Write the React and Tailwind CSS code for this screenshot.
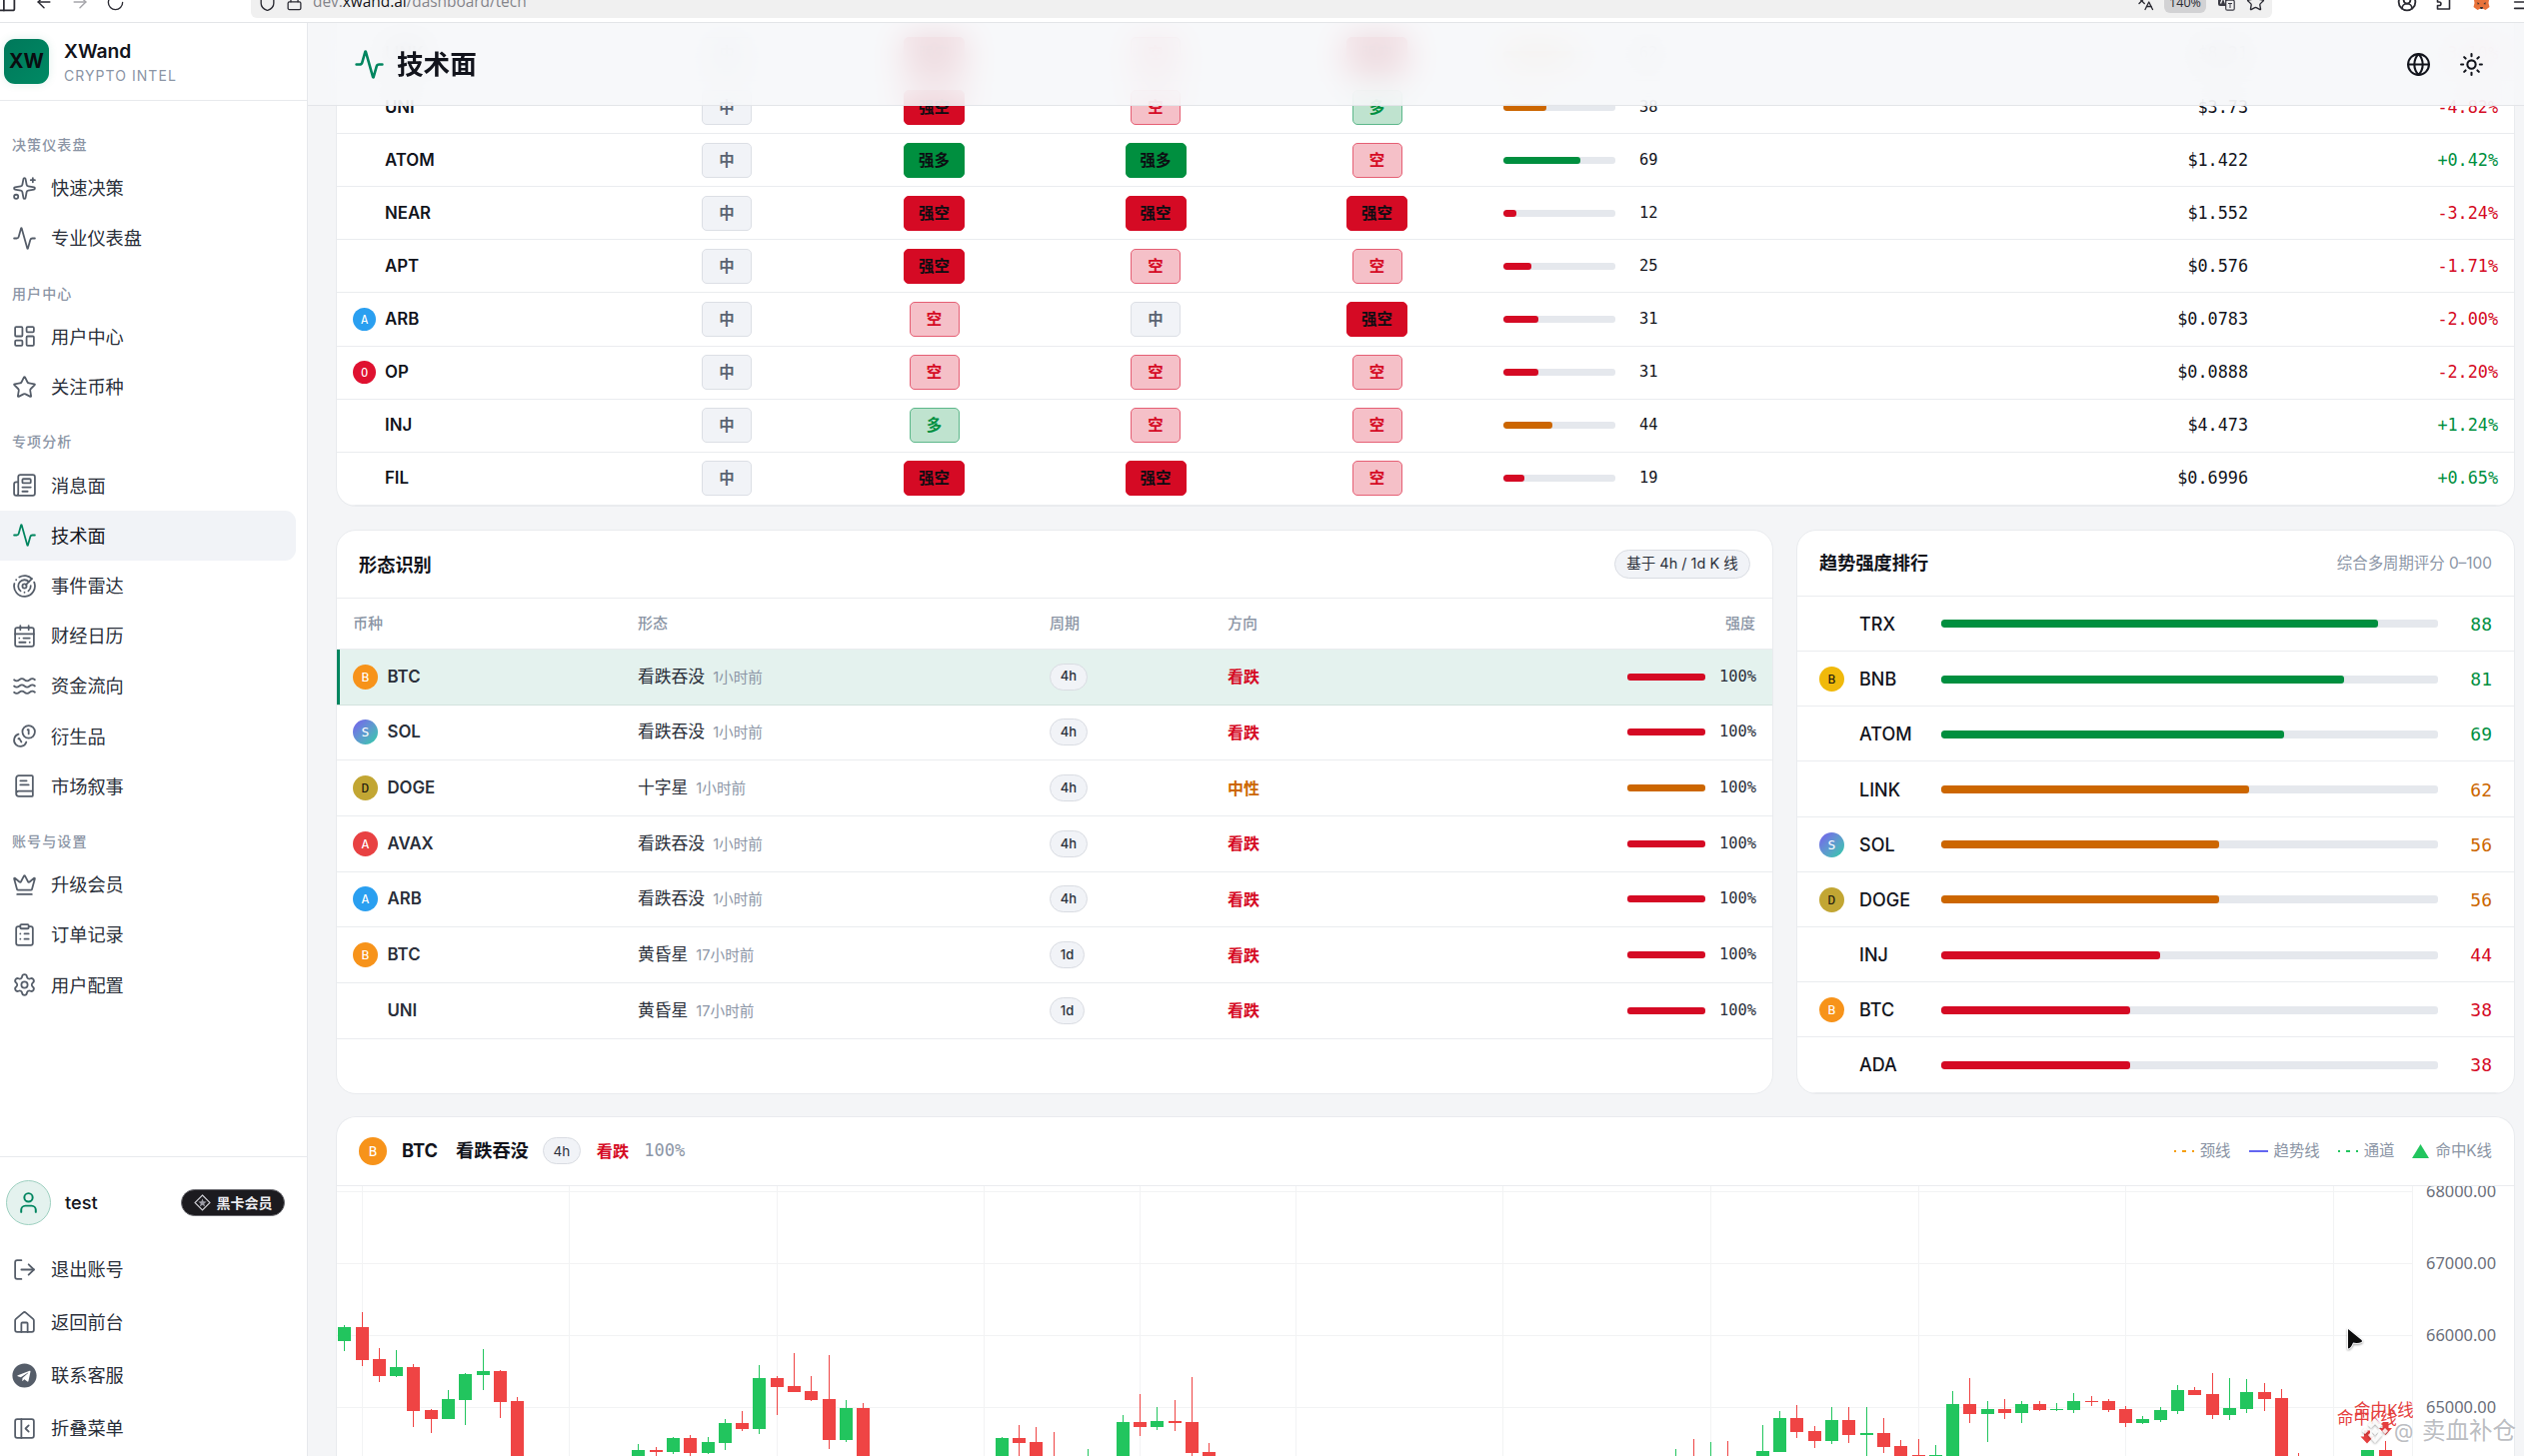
import React from "react";
import {
  Activity, Sparkles, LayoutDashboard, Star, Newspaper, Radar, CalendarRange, Waves,
  BookText, Crown, ClipboardList, Settings, LogOut, House, PanelLeftClose, User, Globe, Sun,
  ArrowLeft, ArrowRight, RotateCw, Shield, Lock, Languages, PanelLeft, CircleUserRound, Menu,
} from "lucide-react";
import { FaTelegram } from "react-icons/fa";

const MONO = "font-['DejaVu_Sans_Mono',monospace]";

function CoinPair({ className, strokeWidth }) {
  return (
    <svg className={className} viewBox="0 0 24 24" fill="none" stroke="currentColor" strokeWidth={strokeWidth} strokeLinecap="round" strokeLinejoin="round">
      <path d="M13.744 17.736a6 6 0 1 1-7.48-7.48" />
      <path d="M15 6h1v4" />
      <path d="m6.134 14.768.866-.5 2 3.464" />
      <circle cx="16" cy="8" r="6" />
    </svg>
  );
}

const NAV = [
  ["决策仪表盘", "h-[62.2px] pt-[32px]", [[Sparkles, "快速决策"], [Activity, "专业仪表盘"]]],
  ["用户中心", "h-[48.2px] pt-[18.500px]", [[LayoutDashboard, "用户中心"], [Star, "关注币种"]]],
  ["专项分析", "h-[48.5px] pt-[18px]", [
    [Newspaper, "消息面"], [Activity, "技术面", true], [Radar, "事件雷达"], [CalendarRange, "财经日历"],
    [Waves, "资金流向"], [CoinPair, "衍生品"], [BookText, "市场叙事"],
  ]],
  ["账号与设置", "h-[48.3px] pt-[18.500px]", [[Crown, "升级会员"], [ClipboardList, "订单记录"], [Settings, "用户配置"]]],
];

const FOOT = [[LogOut, "退出账号"], [House, "返回前台"], [FaTelegram, "联系客服"], [PanelLeftClose, "折叠菜单"]];

const COIN = {
  ARB: "bg-[#2a9ff0] text-white",
  OP: "bg-[#df1130] text-white",
  BTC: "bg-[#f7931a] text-white",
  SOL: "bg-linear-135 from-[#7557ee] to-[#22cda6] text-white",
  DOGE: "bg-[#c2a633] text-[#221a10]",
  AVAX: "bg-[#e84142] text-white",
  BNB: "bg-[#f0b90b] text-[#221a10]",
};

const BG = { r: "bg-[#d50a24]", g: "bg-[#008f3f]", o: "bg-[#cc6600]" };
const FG = { r: "text-[#d50a24]", g: "text-[#008f3f]", o: "text-[#cc6600]" };

const SIGNAL = {
  中: "w-[50px] bg-[#f1f3f7] border-[#dcdfe5] text-[#5b6472]",
  空: "w-[50px] bg-[#f5c0c8] border-[#e55f74] text-[#d50a24]",
  多: "w-[50px] bg-[#bfe3cf] border-[#5cb78a] text-[#008f3f]",
  强空: "w-[61px] bg-[#d50a24] border-[#d50a24] text-[#0c0d12]",
  强多: "w-[61px] bg-[#008f3f] border-[#008f3f] text-[#0c0d12]",
};

const ROWS = [
  ["LINK", ["中", "强空", "空", "强空"], 62, "o", "$8.21", "-3.10%"],
  ["UNI", ["中", "强空", "空", "多"], 38, "o", "$3.73", "-4.82%"],
  ["ATOM", ["中", "强多", "强多", "空"], 69, "g", "$1.422", "+0.42%"],
  ["NEAR", ["中", "强空", "强空", "强空"], 12, "r", "$1.552", "-3.24%"],
  ["APT", ["中", "强空", "空", "空"], 25, "r", "$0.576", "-1.71%"],
  ["ARB", ["中", "空", "中", "强空"], 31, "r", "$0.0783", "-2.00%"],
  ["OP", ["中", "空", "空", "空"], 31, "r", "$0.0888", "-2.20%"],
  ["INJ", ["中", "多", "空", "空"], 44, "o", "$4.473", "+1.24%"],
  ["FIL", ["中", "强空", "强空", "空"], 19, "r", "$0.6996", "+0.65%"],
];

const PATTERNS = [
  ["BTC", "看跌吞没", "1小时前", "4h", "看跌", "r"],
  ["SOL", "看跌吞没", "1小时前", "4h", "看跌", "r"],
  ["DOGE", "十字星", "1小时前", "4h", "中性", "o"],
  ["AVAX", "看跌吞没", "1小时前", "4h", "看跌", "r"],
  ["ARB", "看跌吞没", "1小时前", "4h", "看跌", "r"],
  ["BTC", "黄昏星", "17小时前", "1d", "看跌", "r"],
  ["UNI", "黄昏星", "17小时前", "1d", "看跌", "r"],
];

const RANKS = [
  ["TRX", 88, "g"], ["BNB", 81, "g"], ["ATOM", 69, "g"], ["LINK", 62, "o"], ["SOL", 56, "o"],
  ["DOGE", 56, "o"], ["INJ", 44, "r"], ["BTC", 38, "r"], ["ADA", 38, "r"],
];

// Each candle: centre x, high, body top, body bottom, low, up (1) or down (0).
const CANDLES = [
  [344, 1326, 1328, 1342, 1352, 1], [362, 1313, 1328, 1361, 1367, 0], [379, 1349, 1360, 1377, 1383, 0],
  [396, 1351, 1368, 1377, 1378, 1], [413, 1365, 1368, 1412, 1428, 0], [431, 1410, 1411, 1420, 1434, 0],
  [448, 1391, 1400, 1420, 1420, 1], [465, 1374, 1375, 1401, 1426, 1], [483, 1350, 1372, 1376, 1391, 1],
  [500, 1371, 1372, 1403, 1419, 0], [517, 1398, 1402, 1470, 1470, 0], [638, 1445, 1451, 1470, 1470, 1],
  [656, 1448, 1451, 1453, 1460, 0], [673, 1438, 1439, 1453, 1455, 1], [690, 1436, 1439, 1454, 1458, 0],
  [708, 1438, 1443, 1454, 1455, 1], [725, 1420, 1424, 1444, 1451, 1], [742, 1412, 1424, 1430, 1432, 0],
  [759, 1366, 1379, 1430, 1435, 1], [777, 1377, 1379, 1388, 1416, 0], [794, 1354, 1387, 1393, 1393, 0],
  [811, 1377, 1392, 1401, 1402, 0], [829, 1356, 1400, 1441, 1450, 0], [846, 1401, 1409, 1441, 1443, 1],
  [863, 1404, 1409, 1470, 1470, 0], [1002, 1438, 1439, 1470, 1470, 1], [1019, 1426, 1439, 1444, 1460, 0],
  [1036, 1428, 1443, 1470, 1470, 0], [1054, 1433, 1460, 1470, 1470, 0], [1088, 1450, 1460, 1470, 1470, 1],
  [1123, 1416, 1423, 1470, 1470, 1], [1140, 1395, 1423, 1428, 1437, 0], [1157, 1408, 1422, 1428, 1431, 1],
  [1175, 1401, 1422, 1424, 1432, 0], [1192, 1378, 1423, 1454, 1460, 0], [1209, 1444, 1453, 1470, 1470, 0],
  [1676, 1450, 1460, 1470, 1470, 1], [1694, 1440, 1460, 1470, 1470, 0], [1711, 1443, 1460, 1470, 1470, 1],
  [1728, 1442, 1460, 1470, 1470, 0], [1763, 1426, 1452, 1470, 1470, 1], [1780, 1412, 1419, 1453, 1453, 1],
  [1797, 1406, 1419, 1433, 1439, 0], [1815, 1427, 1432, 1442, 1449, 0], [1832, 1408, 1421, 1442, 1445, 1],
  [1849, 1408, 1421, 1436, 1444, 0], [1867, 1408, 1434, 1436, 1460, 1], [1884, 1419, 1434, 1448, 1454, 0],
  [1901, 1441, 1447, 1470, 1470, 0], [1919, 1440, 1456, 1470, 1470, 0], [1936, 1446, 1456, 1470, 1470, 1],
  [1953, 1392, 1405, 1470, 1470, 1], [1970, 1379, 1405, 1415, 1424, 0], [1988, 1402, 1410, 1415, 1443, 1],
  [2005, 1400, 1410, 1414, 1420, 0], [2022, 1402, 1405, 1414, 1424, 1], [2040, 1402, 1405, 1411, 1412, 0],
  [2057, 1404, 1410, 1411, 1412, 1], [2074, 1394, 1402, 1411, 1414, 1], [2092, 1397, 1402, 1403, 1407, 0],
  [2109, 1400, 1402, 1411, 1413, 0], [2126, 1407, 1410, 1424, 1428, 0], [2143, 1417, 1420, 1424, 1425, 1],
  [2161, 1408, 1411, 1421, 1423, 1], [2178, 1386, 1391, 1412, 1415, 1], [2195, 1388, 1391, 1396, 1396, 0],
  [2213, 1374, 1395, 1416, 1420, 0], [2230, 1379, 1409, 1416, 1421, 1], [2247, 1380, 1393, 1410, 1414, 1],
  [2265, 1384, 1393, 1400, 1412, 0], [2282, 1390, 1399, 1470, 1470, 0], [2299, 1454, 1460, 1470, 1470, 0],
  [2368, 1451, 1451, 1470, 1470, 1], [2386, 1442, 1451, 1470, 1470, 0],
];
const GRID_X = [362, 569, 777, 984, 1140, 1296, 1503, 1711, 1919, 2126, 2334, 2413];
const GRID_Y = [1192, 1264, 1336, 1408];

function Coin({ name, size = "size-[25px] text-[13px]" }) {
  return (
    <span className={`${size} ${MONO} flex shrink-0 items-center justify-center rounded-full leading-none font-normal ${COIN[name] || ""}`}>
      {COIN[name] ? name[0] : ""}
    </span>
  );
}

function Pill({ children, className = "" }) {
  return (
    <span className={`inline-flex items-center justify-center rounded-full border border-[#d9dce2] bg-[#f1f3f7] text-[#2a2f3a] ${className}`}>
      {children}
    </span>
  );
}

function BrowserBar() {
  return (
    <div className="h-[23px] shrink-0 overflow-hidden border-b border-[#e3e5e8] bg-white">
      <div className="-mt-[14px] flex h-8 items-center text-[#2b2b33]">
        <PanelLeft className="-ml-[4px] size-[21px] shrink-0" strokeWidth={2} />
        <ArrowLeft className="ml-[17px] size-[20px] shrink-0" strokeWidth={1.7} />
        <ArrowRight className="ml-[16px] size-[20px] shrink-0 text-[#a5a5aa]" strokeWidth={1.7} />
        <RotateCw className="ml-[16px] size-[19px] shrink-0" strokeWidth={1.7} />
        <div className="ml-[126px] flex h-8 w-[2022px] shrink-0 items-center rounded-md bg-[#f0f0f0] pl-[7px]">
          <Shield className="size-[19px]" strokeWidth={1.7} />
          <Lock className="ml-[9px] size-[17px]" strokeWidth={1.8} />
          <span className="ml-[10px] text-[15.4px] leading-none text-[#85858b] font-['Open_Sans',sans-serif]">
            dev.<span className="text-[#15151a]">xwand.ai</span>/dashboard/tech
          </span>
          <span className="grow" />
          <Languages className="size-[18px]" strokeWidth={1.8} />
          <span className="ml-[10px] flex h-[21px] w-[42px] items-center justify-center rounded-md bg-[#d2d2d4] pt-[2px] text-[12.5px] leading-none font-['Open_Sans',sans-serif]">140%</span>
          <svg className="ml-[12px] size-[17px]" viewBox="0 0 17 17">
            <rect x="0" y="0" width="10" height="12" rx="2" fill="#3b3b44" />
            <path d="M2.5 9.5 5 3l2.500 6.500" fill="none" stroke="#f0f0f0" strokeWidth="1.3" />
            <rect x="7.700" y="6.200" width="8.500" height="10" rx="1.500" fill="#f0f0f0" stroke="#3b3b44" strokeWidth="1.200" />
            <path d="M10 9.500h4M12 9v5" stroke="#3b3b44" strokeWidth="1" />
          </svg>
          <Star className="mr-[7px] ml-[11px] size-[19px]" strokeWidth={1.7} />
        </div>
        <CircleUserRound className="ml-[125px] size-[20px] shrink-0" strokeWidth={2.200} />
        <svg className="ml-[19px] size-[16px] shrink-0" viewBox="0 0 16 16" fill="none" stroke="currentColor" strokeWidth="1.600" strokeLinejoin="round">
          <path d="M1.500 3h4V1.500h4V3h4v12h-12v-3.500h1.700a1.700 1.700 0 0 0 0-3.500H1.500z" />
        </svg>
        <svg className="ml-[21px] h-[16px] w-[17px] shrink-0" viewBox="0 0 17 16">
          <path d="M0 0l7 4h3l7-4-1.500 9 1 4-4 3-3-1.500h-2L4.500 16l-4-3 1-4z" fill="#e8723a" />
          <path d="M4.500 8l2 2-2 .5zM12.500 8l-2 2 2 .5zM7 13h3l-.5 2h-2z" fill="#33302f" />
        </svg>
        <Menu className="ml-[21px] size-[22px] shrink-0" strokeWidth={1.8} />
      </div>
    </div>
  );
}

function Sidebar() {
  return (
    <aside className="flex w-[308px] shrink-0 flex-col border-r border-[#e6e8ec] bg-white">
      <div className="flex h-[78px] shrink-0 items-center border-b border-[#e8eaed] pl-1">
        <div className="flex size-[45px] items-center justify-center rounded-[11px] bg-linear-135 from-[#00785a] to-[#008a64] text-[19.6px] font-bold text-[#0a0c10] shadow-[0_0_10px_rgba(0,133,98,0.12)]">XW</div>
        <div className="ml-[15px] flex flex-col pt-[3px]">
          <span className="text-[19.3px] leading-[24px] font-semibold text-[#12141c]">XWand</span>
          <span className="mt-[1px] text-[14px] leading-[24px] tracking-[1.05px] text-[#8b95a5]">CRYPTO INTEL</span>
        </div>
      </div>
      <nav className="flex grow flex-col">
        {NAV.map(([title, head, items]) => (
          <div key={title} className="flex flex-col">
            <div className={`${head} pl-3 text-[14px] leading-[24px] font-medium tracking-[1.1px] text-[#8b95a5]`}>{title}</div>
            {items.map(([Icon, label, active]) => (
              <div key={label} className={`mr-[11px] flex h-[50.2px] items-center rounded-r-[11px] pl-3 ${active ? "bg-[#f1f3f7]" : ""}`}>
                <Icon className={`size-[25px] ${active ? "text-[#00855f]" : "text-[#555d69]"}`} strokeWidth={1.7} />
                <span className={`ml-[14px] text-[18.2px] leading-none ${active ? "text-[#12141c]" : "text-[#2a2f3a]"}`}>{label}</span>
              </div>
            ))}
          </div>
        ))}
      </nav>
      <div className="flex h-[300px] shrink-0 flex-col border-t border-[#e8eaed] pt-[23px]">
        <div className="mb-[18px] flex h-[45px] items-center pl-[6px]">
          <span className="flex size-[45px] items-center justify-center rounded-full border border-[#9dd0c0] bg-[#e4f2ee]">
            <User className="size-[25px] text-[#00855f]" strokeWidth={1.9} />
          </span>
          <span className="ml-[14px] text-[18.2px] font-medium text-[#12141c]">test</span>
          <span className="mr-[22px] ml-auto flex h-[27px] w-[104px] items-center justify-center gap-[6px] rounded-full border border-[#6a6a70] bg-[#1c1b1f] text-[14px] font-semibold text-[#ececf0]">
            <svg className="size-[17px]" viewBox="0 0 17 17">
              <path d="M8.500 1 16 8.500 8.500 16 1 8.500z" fill="none" stroke="#d0d0d6" strokeWidth="1.100" />
              <path d="M8.500 4.500l1.100 2.800 3 .2-2.300 1.900.8 3-2.600-1.700-2.600 1.700.8-3-2.300-1.900 3-.2z" fill="#9c9ca6" />
            </svg>
            黑卡会员
          </span>
        </div>
        {FOOT.map(([Icon, label]) => (
          <div key={label} className="flex h-[53px] shrink-0 items-center pl-3">
            <Icon className="size-[25px] text-[#555d69]" strokeWidth={Icon === FaTelegram ? 0 : 1.7} />
            <span className="ml-[14px] text-[18.2px] leading-none text-[#2a2f3a]">{label}</span>
          </div>
        ))}
      </div>
    </aside>
  );
}

function Header() {
  return (
    <header className="absolute inset-x-0 top-0 z-10 flex h-[83px] items-center border-b border-[#e3e5e9] bg-[#f6f7f9]/86 pl-[46px] backdrop-blur-[17px]">
      <Activity className="size-[31px] text-[#00855f]" strokeWidth={2} />
      <h1 className="ml-[12px] text-[26.600px] leading-none font-bold text-[#12141c]">技术面</h1>
      <Globe className="ml-auto size-[25px] text-[#12141c]" strokeWidth={2} />
      <Sun className="mr-[40px] ml-[28px] size-[25px] text-[#12141c]" strokeWidth={2} />
    </header>
  );
}

function SignalTable() {
  return (
    <section className="overflow-hidden rounded-b-[20px] border border-t-0 border-[#e9ebee] bg-white pt-[5px]">
      {ROWS.map(([name, signals, score, tone, price, change]) => (
        <div key={name} className="grid h-[53.1px] grid-cols-[279px_222px_193px_250px_193px_426px_366px_249px] items-center border-b border-[#eaecef]">
          <div className="flex items-center gap-[9px] pl-4 text-[16.8px] font-semibold text-[#12141c]">
            <Coin name={name} size="size-[23px] text-[12px]" />
            {name}
          </div>
          {signals.map((s, i) => (
            <span key={i} className={`flex h-[35px] items-center justify-center justify-self-center rounded-[5px] border text-[15.4px] font-semibold ${SIGNAL[s]}`}>{s}</span>
          ))}
          <div className="flex items-center pl-[30px]">
            <span className="mr-6 h-[7px] w-[112px] overflow-hidden rounded-[3px] bg-[#e5e8ed]">
              <span className={`block h-full rounded-[3px] ${BG[tone]}`} style={{ width: `${score}%` }} />
            </span>
            <span className={`${MONO} text-[15.400px] text-[#12141c]`}>{score}</span>
          </div>
          <span className={`${MONO} pr-[17px] text-right text-[16.800px] text-[#12141c]`}>{price}</span>
          <span className={`${MONO} pr-[16px] text-right text-[16.800px] ${change[0] === "+" ? FG.g : FG.r}`}>{change}</span>
        </div>
      ))}
    </section>
  );
}

function PatternCard() {
  const cols = "grid grid-cols-[301px_412px_178px_1fr_146px] items-center";
  return (
    <section className="flex h-[565px] w-[1438px] flex-col overflow-hidden rounded-[20px] border border-[#e9ebee] bg-white">
      <div className="flex h-[68px] shrink-0 items-center justify-between border-b border-[#eaecef] pr-[22px] pl-[22px]">
        <h2 className="pt-[2px] text-[18.2px] font-semibold text-[#12141c]">形态识别</h2>
        <Pill className="h-[29px] w-[136px] text-[14.500px]">基于 4h / 1d K 线</Pill>
      </div>
      <div className={`${cols} h-[51px] shrink-0 border-b border-[#eaecef] text-[15px] font-medium text-[#8b95a5]`}>
        <span className="pl-4">币种</span>
        <span>形态</span>
        <span>周期</span>
        <span>方向</span>
        <span className="pr-[17px] text-right">强度</span>
      </div>
      {PATTERNS.map(([name, pattern, ago, period, dir, tone], i) => (
        <div key={i} className={`${cols} h-[55.7px] shrink-0 border-b ${i === 0 ? "border-[#d3e2de] bg-[#e4f2ee] shadow-[inset_3px_0_0_#00855f]" : "border-[#eaecef]"}`}>
          <div className="flex items-center gap-[9.500px] pl-4 text-[16.800px] font-semibold text-[#2a2f3a]">
            <Coin name={name} />
            {name}
          </div>
          <div className="flex items-baseline gap-[8px] text-[16.800px] text-[#2a2f3a]">
            {pattern}
            <span className="text-[14.600px] text-[#8b95a5]">{ago}</span>
          </div>
          <div className="flex">
            <Pill className={`h-[27px] text-[13px] font-medium ${period === "4h" ? "w-[38px]" : "w-[35px]"}`}>{period}</Pill>
          </div>
          <span className={`text-[16px] font-semibold ${FG[tone]}`}>{dir}</span>
          <div className="flex items-center justify-end pr-4">
            <span className={`h-[7px] w-[78px] shrink-0 rounded-[3px] ${BG[tone]}`} />
            <span className={`${MONO} ml-[14px] text-[15.400px] text-[#2a2f3a]`}>100%</span>
          </div>
        </div>
      ))}
    </section>
  );
}

function RankCard() {
  return (
    <section className="flex h-[565px] w-[719px] flex-col overflow-hidden rounded-[20px] border border-[#e9ebee] bg-white">
      <div className="flex h-[66px] shrink-0 items-center justify-between border-b border-[#eaecef] px-[22px]">
        <h2 className="text-[18.2px] font-semibold text-[#12141c]">趋势强度排行</h2>
        <span className="text-[15.400px] text-[#8b95a5]">综合多周期评分 0–100</span>
      </div>
      {RANKS.map(([name, score, tone]) => (
        <div key={name} className="flex h-[55.2px] shrink-0 items-center border-b border-[#eaecef] px-[22px] pt-px">
          <Coin name={name} />
          <span className="ml-[15px] w-[82px] text-[18px] font-medium text-[#12141c]">{name}</span>
          <span className="h-[8px] w-[497px] overflow-hidden rounded-[3px] bg-[#e5e8ed]">
            <span className={`block h-full rounded-[3px] ${BG[tone]}`} style={{ width: `${score}%` }} />
          </span>
          <span className={`${MONO} ml-auto text-[18px] ${FG[tone]}`}>{score}</span>
        </div>
      ))}
    </section>
  );
}

function DotLine({ color }) {
  return (
    <svg className="h-[2px] w-[20px]" viewBox="0 0 20 2" fill={color}>
      <rect width="2" height="2" /><rect x="8" width="4" height="2" /><rect x="18" width="2" height="2" />
    </svg>
  );
}

function Chart() {
  return (
    <svg className="block h-[270px] w-[2178px]" viewBox="337 1187 2178 270">
      <defs>
        <clipPath id="plot"><rect x="337" y="1187" width="2077" height="270" /></clipPath>
        <filter id="mark-shadow" x="-30%" y="-30%" width="160%" height="160%">
          <feDropShadow dx="0" dy="1" stdDeviation="1.300" floodColor="#000" floodOpacity="0.45" />
        </filter>
      </defs>
      <g fill="#f2f3f4" shapeRendering="crispEdges">
        {GRID_Y.map((y) => <rect key={y} x="337" y={y} width="2077" height="1" />)}
        {GRID_X.map((x) => <rect key={x} x={x} y="1187" width="1" height="270" />)}
      </g>
      <g shapeRendering="crispEdges">
        {CANDLES.map(([x, hi, top, bot, lo, up]) => (
          <g key={x} fill={up ? "#22c55e" : "#ef4444"}>
            <rect x={x} y={hi} width="1" height={lo - hi} />
            <rect x={x - 6} y={top} width="13" height={bot - top} />
          </g>
        ))}
      </g>
      <g fill="#6b6f7b" fontFamily="'Noto Sans', sans-serif" fontSize="16.400">
        {["68000.00", "67000.00", "66000.00", "65000.00"].map((t, i) => (
          <text key={t} x="2427" y={1198 + i * 72}>{t}</text>
        ))}
      </g>
      <g clipPath="url(#plot)" fill="#e53e3e">
        <g fontFamily="'Noto Sans', 'Noto Sans CJK SC', sans-serif" fontSize="16.500">
          <text x="2338" y="1424.500">命中K线</text>
          <text x="2355" y="1417">命中K线</text>
        </g>
        <path d="M2365 1431.500h6v6h3.500l-6.500 7-6.500-7h3.500z" />
        <path d="M2383.500 1423h6v6h3.500l-6.500 7-6.500-7h3.500z" />
      </g>
      <path d="M2349 1330v19.500q3-.5 5-6 4.500 1 8.500-.5 1-1 0-2z" fill="#07070c" stroke="#fff" strokeWidth="1.500" strokeLinejoin="round" paintOrder="stroke" filter="url(#mark-shadow)" />
      <g filter="url(#mark-shadow)" fill="#fff" fillOpacity="0.85">
        <path d="M2376 1419l7 7-3 3-4-4-4 4-3-3zM2366 1429l3 3-3 3-3-3zM2386 1429l3 3-3 3-3-3zM2376 1429l3.500 3.500-3.500 3.500-3.500-3.500zM2369 1436l3-3 4 7 4-7 3 3-7 8z" />
      </g>
    </svg>
  );
}

function ChartCard() {
  return (
    <section className="h-[360px] shrink-0 rounded-t-[20px] border border-b-0 border-[#e9ebee] bg-white">
      <div className="flex h-[69px] items-center border-b border-[#eaecef] px-[22px]">
        <Coin name="BTC" size="size-[28px] text-[14px]" />
        <span className="ml-[15px] text-[18.2px] font-bold text-[#12141c]">BTC</span>
        <span className="ml-[18px] text-[18.2px] font-bold text-[#12141c]">看跌吞没</span>
        <Pill className="ml-[14px] h-[27px] w-[38px] text-[13.500px]">4h</Pill>
        <span className="ml-[16px] text-[16.200px] font-semibold text-[#d50a24]">看跌</span>
        <span className={`${MONO} ml-[15px] text-[17px] text-[#8b95a5]`}>100%</span>
        <div className="ml-auto flex items-center gap-[18px] text-[15.400px] text-[#8b95a5]">
          <span className="flex items-center gap-[6px]"><DotLine color="#f59e0b" />颈线</span>
          <span className="flex items-center gap-[6px]"><span className="h-[2px] w-[19px] bg-[#6366f1]" />趋势线</span>
          <span className="flex items-center gap-[6px]"><DotLine color="#22c55e" />通道</span>
          <span className="flex items-center gap-[6px]">
            <svg className="mt-px h-[14px] w-[17px]" viewBox="0 0 17 14"><path d="M8.500 0 17 14H0z" fill="#22c55e" /></svg>
            命中K线
          </span>
        </div>
      </div>
      <Chart />
    </section>
  );
}

export default function App() {
  return (
    <div className="flex h-[1457px] w-[2525px] flex-col overflow-hidden bg-white font-[Inter,'Noto_Sans_CJK_SC',sans-serif]">
      <BrowserBar />
      <div className="flex h-[1434px]">
        <Sidebar />
        <main className="relative h-[1434px] grow overflow-hidden bg-[#f4f5f7]">
          <Header />
          <div className="ml-[28px] flex w-[2180px] flex-col">
            <SignalTable />
            <div className="mt-[23px] mb-[22px] flex gap-[23px]">
              <PatternCard />
              <RankCard />
            </div>
            <ChartCard />
          </div>
          <div className="absolute top-[1391px] left-[2087px] z-20 flex items-center gap-[7px] text-[23.500px] leading-[36px] whitespace-nowrap text-[#b3b5ba]/90 [text-shadow:0_1px_1px_rgba(255,255,255,0.8)]">
            <span className="w-[21px] text-[20px]">@</span>
            <span>卖血补仓</span>
          </div>
        </main>
      </div>
    </div>
  );
}
